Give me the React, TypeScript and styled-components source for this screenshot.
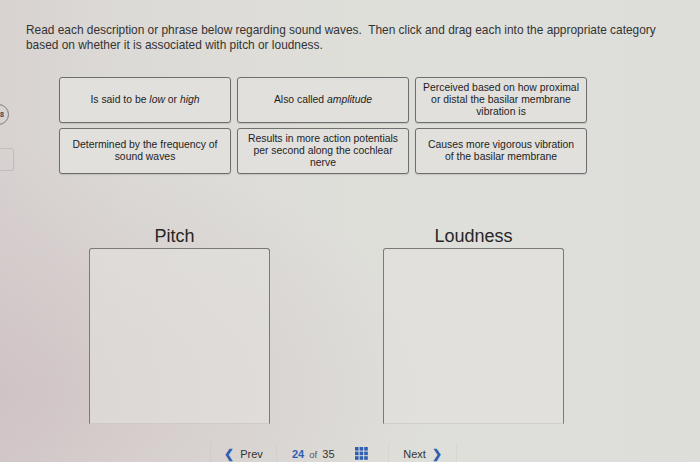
import React from "react";
import styled, { createGlobalStyle } from "styled-components";

const Global = createGlobalStyle`
  html, body { margin: 0; padding: 0; }
  body {
    font-family: "Liberation Sans", Arial, sans-serif;
    color: #2b2b2b;
  }
`;

const Page = styled.div`
  position: relative;
  width: 700px;
  height: 462px;
  overflow: hidden;
  background:
    radial-gradient(ellipse at 0% 85%, rgba(200, 180, 185, 0.5) 0%, rgba(200, 180, 185, 0) 45%),
    linear-gradient(90deg, #d8d2d1 0%, #dcdad6 18%, #dfdfda 55%, #dddeda 100%);
  display: flex;
  flex-direction: column;
`;

const Instructions = styled.p`
  margin: 23px 0 0 26px;
  width: 645px;
  font-size: 11.9px;
  line-height: 15px;
  color: #333;
`;

const CardGrid = styled.div`
  display: grid;
  grid-template-columns: repeat(3, 172px);
  grid-auto-rows: 46px;
  column-gap: 6px;
  row-gap: 5px;
  margin: 24px 0 0 59px;
`;

const Card = styled.div<{ $pad?: number }>`
  display: flex;
  align-items: center;
  justify-content: center;
  text-align: center;
  padding: 0 ${(p) => p.$pad ?? 6}px;
  border: 1px solid #6e6e6e;
  border-radius: 3px;
  background: #e1e0dc;
  box-shadow: 0 1px 1px rgba(0, 0, 0, 0.12);
  font-size: 10.4px;
  line-height: 12px;
  color: #1e1e1e;
`;

const Categories = styled.div`
  display: flex;
  gap: 113px;
  margin: 52px 0 0 89px;
`;

const Category = styled.div`
  display: flex;
  flex-direction: column;
  width: 181px;
`;

const CategoryTitle = styled.div<{ $shift?: number }>`
  text-align: center;
  font-size: 18px;
  line-height: 20px;
  color: #262626;
  margin-left: ${(p) => p.$shift ?? 0}px;
`;

const DropZone = styled.div`
  height: 174px;
  margin-top: 2px;
  border: 1px solid #7a7a7a;
  border-bottom-color: rgba(120, 120, 120, 0.15);
  border-radius: 3px 3px 0 0;
  background: rgba(226, 225, 221, 0.6);
`;

const Pager = styled.nav`
  display: flex;
  height: 30px;
  margin: 19px 0 0 210px;
  font-size: 11px;
  color: #333;
`;

const PagerCell = styled.div<{ $w: number; $start?: boolean }>`
  width: ${(p) => p.$w}px;
  box-sizing: border-box;
  display: flex;
  align-items: center;
  justify-content: ${(p) => (p.$start ? "flex-start" : "center")};
  padding: 2px 0 0 ${(p) => (p.$start ? 15 : 0)}px;
  gap: 6px;
  border-left: 1px solid rgba(160, 160, 160, 0.12);
  &:last-child {
    border-right: 1px solid rgba(160, 160, 160, 0.12);
  }
`;

const Arrow = styled.span`
  color: #2f5fb0;
  font-weight: bold;
  font-size: 12px;
`;

const Current = styled.span`
  color: #2f5fb0;
  font-weight: bold;
`;

const Of = styled.span`
  font-size: 9.5px;
  color: #555;
  margin: 0 2px;
`;

const Badge = styled.div`
  position: absolute;
  left: -12px;
  top: 104px;
  width: 21px;
  height: 21px;
  border: 1.5px solid #7c7c7c;
  border-radius: 50%;
  display: flex;
  align-items: center;
  justify-content: flex-end;
  padding-right: 4px;
  box-sizing: border-box;
  font-size: 7px;
  font-weight: bold;
  color: #444;
`;

const Ghost = styled.div`
  position: absolute;
  left: -6px;
  top: 148px;
  width: 18px;
  height: 21px;
  border: 1px solid rgba(150, 150, 150, 0.35);
  border-radius: 2px;
`;

const GridIcon = () => (
  <svg width="13" height="13" viewBox="0 0 13 13" style={{ marginLeft: 14 }}>
    {[0, 1, 2].map((r) =>
      [0, 1, 2].map((c) => (
        <rect key={`${r}-${c}`} x={c * 4.6} y={r * 4.6} width="3.6" height="3.6" fill="#2f5fb0" />
      ))
    )}
  </svg>
);

export default function App() {
  return (
    <>
      <Global />
      <Page>
        <Badge>8</Badge>
        <Ghost />
        <Instructions>
          Read each description or phrase below regarding sound waves.&nbsp; Then click and drag each into the
          appropriate category based on whether it is associated with pitch or loudness.
        </Instructions>
        <CardGrid>
          <Card>
            <span>
              Is said to be <i>low</i> or <i>high</i>
            </span>
          </Card>
          <Card>
            <span>
              Also called <i>amplitude</i>
            </span>
          </Card>
          <Card $pad={4}>Perceived based on how proximal or distal the basilar membrane vibration is</Card>
          <Card>Determined by the frequency of sound waves</Card>
          <Card>Results in more action potentials per second along the cochlear nerve</Card>
          <Card $pad={10}>Causes more vigorous vibration of the basilar membrane</Card>
        </CardGrid>
        <Categories>
          <Category>
            <CategoryTitle $shift={-10}>Pitch</CategoryTitle>
            <DropZone />
          </Category>
          <Category>
            <CategoryTitle>Loudness</CategoryTitle>
            <DropZone />
          </Category>
        </Categories>
        <Pager>
          <PagerCell $w={66}>
            <Arrow>&#10094;</Arrow>
            <span>Prev</span>
          </PagerCell>
          <PagerCell $w={112} $start>
            <span>
              <Current>24</Current> <Of>of</Of> 35
            </span>
            <GridIcon />
          </PagerCell>
          <PagerCell $w={69}>
            <span>Next</span>
            <Arrow>&#10095;</Arrow>
          </PagerCell>
        </Pager>
      </Page>
    </>
  );
}
